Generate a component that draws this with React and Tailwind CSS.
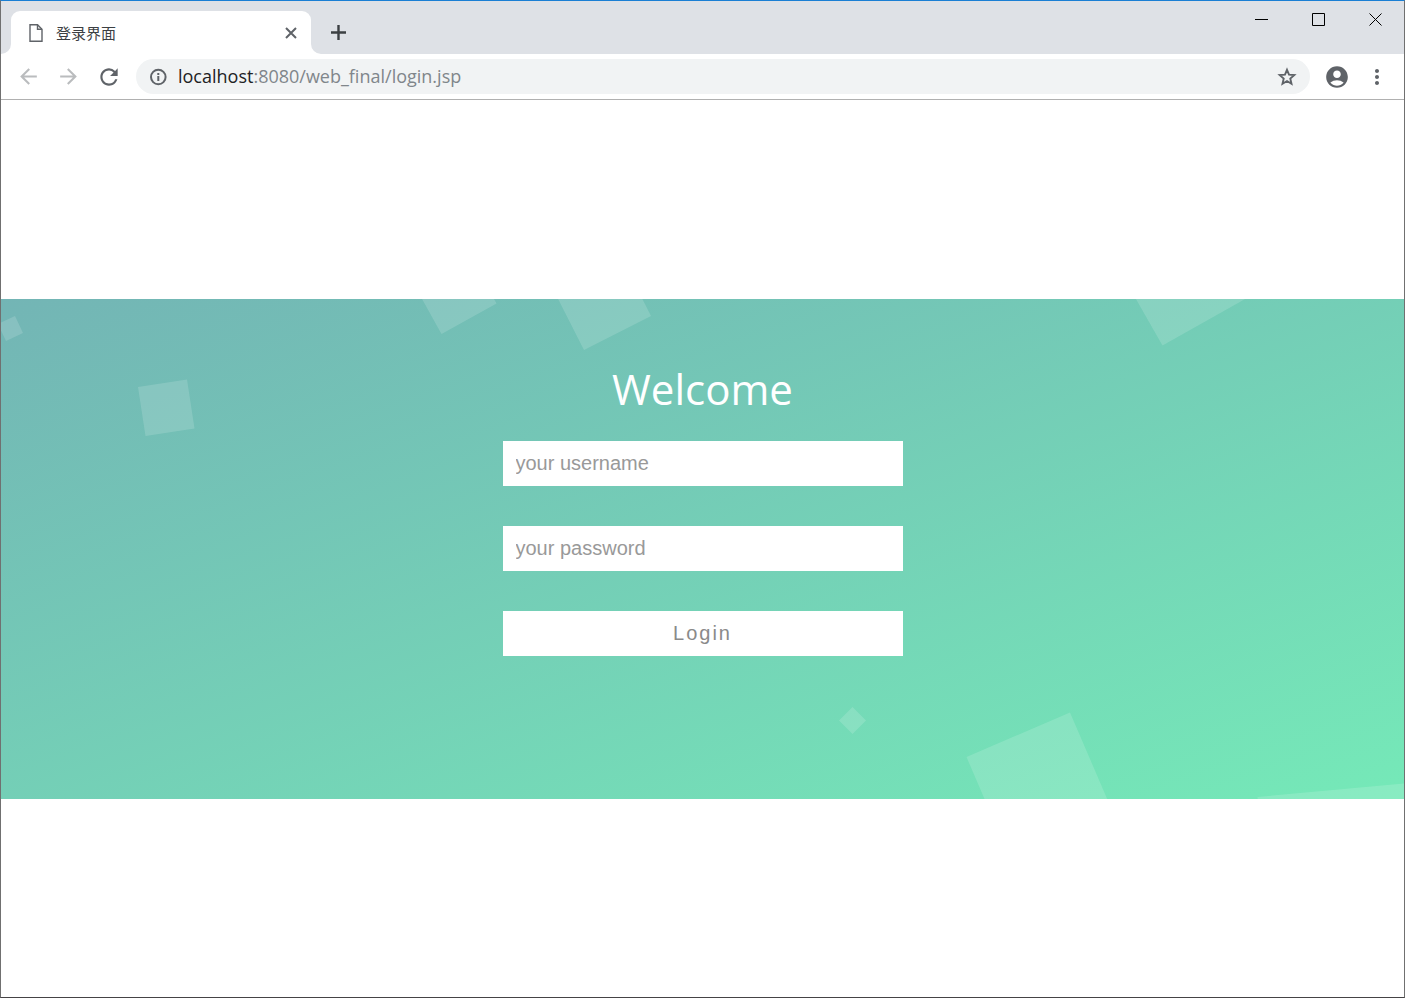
import React, { useState } from 'react';
import { MdAccountCircle, MdArrowBack, MdArrowForward, MdMoreVert, MdRefresh } from 'react-icons/md';

const SQUARES = [
  '14,17 22,34 5,42 -3,25',
  '137,88 186,80.5 193.5,129.5 144.5,137',
  '440.5,35 495.5,4.5 465,-50.5 410,-20',
  '583,51 650,17 616,-50 549,-16',
  '1161.5,46.5 1253,-5 1203,-93 1111,-42',
  '838,421.5 851.5,408 865,421.5 851.5,435',
  '965.5,458 1069,413.5 1113.5,517 1010,561.5',
  '1256.5,498 1403,484.5 1417,630 1270,645',
];

function TabFoot({ flip }) {
  return (
    <svg
      viewBox="0 0 10 10"
      className={`w-[10px] h-[10px] fill-white ${flip ? '-scale-x-100' : ''}`}
      aria-hidden="true"
    >
      <path d="M10 0v10H0A10 10 0 0 0 10 0z" />
    </svg>
  );
}

function LineIcon({ size, strokeWidth = 2, children }) {
  return (
    <svg
      width={size}
      height={size}
      viewBox={`0 0 ${size} ${size}`}
      fill="none"
      stroke="currentColor"
      strokeWidth={strokeWidth}
      aria-hidden="true"
    >
      {children}
    </svg>
  );
}

function WindowButton({ label, children }) {
  return (
    <button type="button" aria-label={label} className="w-[57px] h-[37px] flex items-center justify-center">
      <svg viewBox="0 0 13 13" className="w-[13px] h-[13px] stroke-black fill-none" aria-hidden="true">
        {children}
      </svg>
    </button>
  );
}

function TabStrip() {
  return (
    <div className="h-[53px] flex items-end bg-[#dee1e6]">
      <TabFoot />
      <div className="w-[300px] h-[43px] pl-[18px] pr-[11px] flex items-center bg-white rounded-t-[9px]">
        <svg viewBox="0 0 14 18" className="w-[14px] h-[18px] fill-none stroke-[#5f6368]" strokeWidth="1.4" aria-hidden="true">
          <path d="M1 .7h7.5L13 5.2v12H1z" />
          <path d="M8.5 .7v4.5H13" />
        </svg>
        <span className="flex-1 ml-[13px] text-[15px] leading-5 text-[#3c4043]">登录界面</span>
        <button type="button" aria-label="Close tab" className="text-[#5f6368]">
          <LineIcon size={18}>
            <path d="M4 4l10 10M14 4L4 14" />
          </LineIcon>
        </button>
      </div>
      <TabFoot flip />
      <button type="button" aria-label="New tab" className="h-[43px] ml-1 text-[#3c4043]">
        <LineIcon size={27} strokeWidth={2.4}>
          <path d="M6 13.5h15M13.5 6v15" />
        </LineIcon>
      </button>
      <div className="flex-1 self-start flex justify-end">
        <WindowButton label="Minimize">
          <path d="M0 6.5h13" />
        </WindowButton>
        <WindowButton label="Maximize">
          <path d="M.5 .5h12v12H.5z" />
        </WindowButton>
        <WindowButton label="Close">
          <path d="M.5 .5l12 12M12.5 .5l-12 12" />
        </WindowButton>
      </div>
    </div>
  );
}

function Toolbar() {
  return (
    <div className="h-[46px] px-[15px] flex items-center bg-white border-b border-[#b0b0b0] text-[#5f6368]">
      <button type="button" aria-label="Back" className="text-[#babcbe]">
        <MdArrowBack size={25} />
      </button>
      <button type="button" aria-label="Forward" className="ml-[15px] text-[#babcbe]">
        <MdArrowForward size={25} />
      </button>
      <button type="button" aria-label="Reload" className="ml-[15px]">
        <MdRefresh size={26} />
      </button>
      <div className="flex-1 h-[35px] ml-[14px] px-3 flex items-center rounded-full bg-[#f1f3f4]">
        <button type="button" aria-label="Site information">
          <LineIcon size={20}>
            <circle cx="10.3" cy="10" r="7.3" />
            <path d="M10.3 9v5M10.3 6v1.9" />
          </LineIcon>
        </button>
        <span className="flex-1 ml-[10px] pb-[2px] text-[18px] leading-6 text-[#80868b]">
          <span className="text-[#202124]">localhost</span>:8080/web_final/login.jsp
        </span>
        <button type="button" aria-label="Bookmark this page">
          <LineIcon size={22} strokeWidth={1.9}>
            <path d="M11 3.8l2 4.9 5.3.4-4 3.5 1.2 5.1L11 15l-4.5 2.7 1.2-5.1-4-3.5 5.3-.4z" />
          </LineIcon>
        </button>
      </div>
      <button type="button" aria-label="Profile" className="ml-[14px]">
        <MdAccountCircle size={26} />
      </button>
      <button type="button" aria-label="Menu" className="ml-[15px]">
        <MdMoreVert size={24} />
      </button>
    </div>
  );
}

function LoginForm() {
  const [username, setUsername] = useState('');
  const [password, setPassword] = useState('');
  const field =
    'w-full h-[45px] px-[13px] bg-white text-[20px] text-[#666] placeholder:text-[#999] placeholder:opacity-100 outline-none font-["Liberation_Sans",Arial,sans-serif]';

  return (
    <form
      onSubmit={(e) => e.preventDefault()}
      className="relative w-full max-w-[400px] mx-auto flex flex-col gap-10"
    >
      <input
        type="text"
        aria-label="Username"
        placeholder="your username"
        value={username}
        onChange={(e) => setUsername(e.target.value)}
        className={field}
      />
      <input
        type="password"
        aria-label="Password"
        placeholder="your password"
        value={password}
        onChange={(e) => setPassword(e.target.value)}
        className={field}
      />
      <button
        type="submit"
        className='w-full h-[45px] pb-[2px] bg-white text-[20px] text-[#8a8a8a] tracking-[2px] font-["Liberation_Sans",Arial,sans-serif]'
      >
        Login
      </button>
    </form>
  );
}

function App() {
  return (
    <div className='min-h-screen flex flex-col bg-white border border-[#707070] border-t-[#1a7fd4] border-b-[#454345] font-["Open_Sans","Noto_Sans_CJK_SC",sans-serif]'>
      <TabStrip />
      <Toolbar />
      <main className="flex-1 pt-[199px]">
        <section className="relative h-[500px] pt-[60px] overflow-hidden bg-linear-[to_bottom_right,#73b5b5,#75e9b8]">
          <svg
            viewBox="0 0 1403 500"
            preserveAspectRatio="xMidYMid slice"
            className="absolute inset-0 w-full h-full fill-white/15"
            aria-hidden="true"
          >
            {SQUARES.map((points) => (
              <polygon key={points} points={points} />
            ))}
          </svg>
          <h1 className="relative mb-[22px] text-center text-[42px] leading-[60px] text-white">Welcome</h1>
          <LoginForm />
        </section>
      </main>
    </div>
  );
}

export default App;
